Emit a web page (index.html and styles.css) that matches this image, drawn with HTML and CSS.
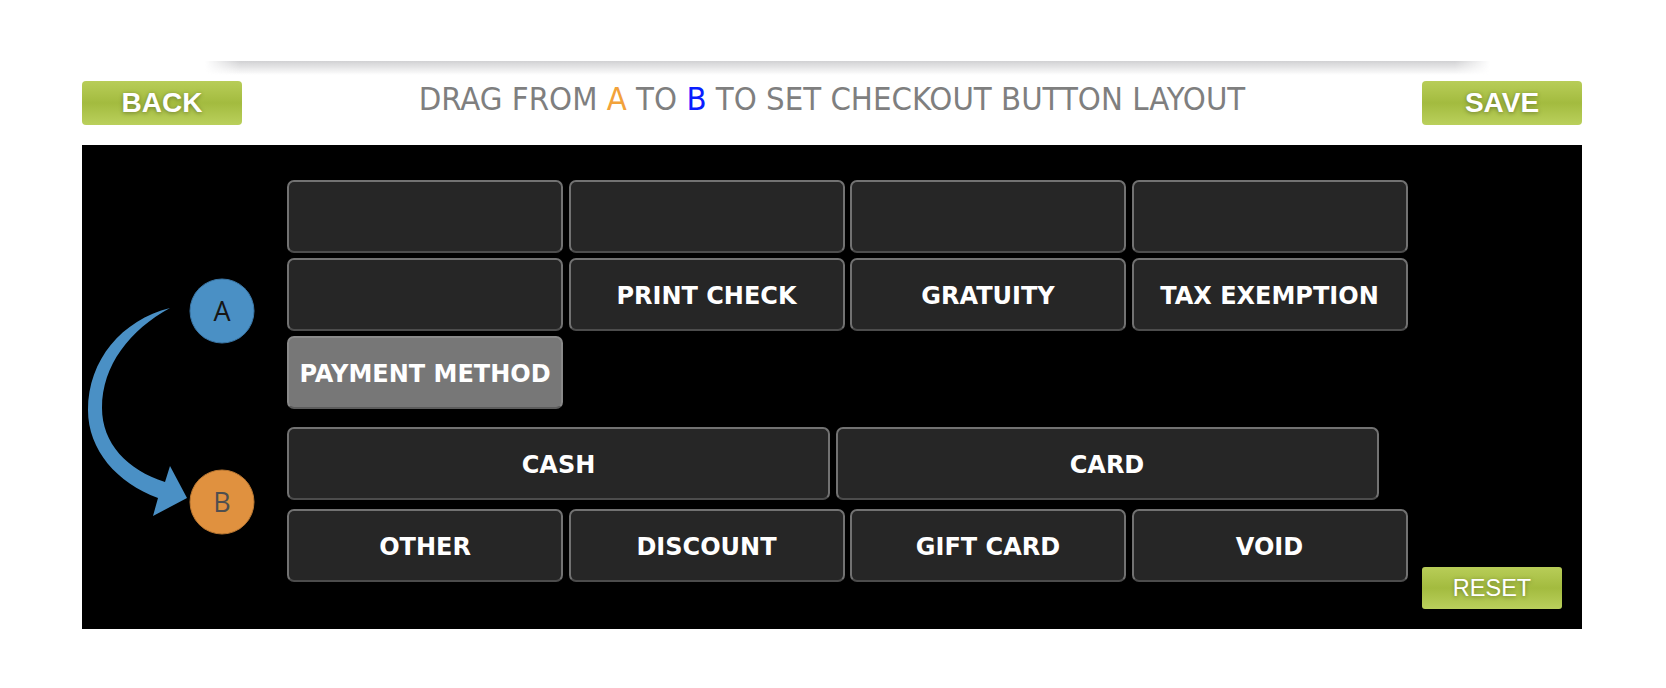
FILE: index.html
```html
<!DOCTYPE html>
<html lang="en">
<head>
    <meta charset="UTF-8">
    <meta name="viewport" content="width=device-width, initial-scale=1.0">
    <title>Checkout Button Layout</title>
    <link rel="stylesheet" href="styles.css">
</head>
<body>
    <div class="top-shadow"></div>
    <div class="toolbar">
        <a href="#" class="green-button">BACK</a>
        <div class="title">DRAG FROM <span class="from">A</span> TO <span class="to">B</span> TO SET CHECKOUT BUTTON LAYOUT</div>
        <a href="#" class="green-button">SAVE</a>
    </div>
    <div class="panel">
        <div class="legend">
            <svg width="205" height="484" viewBox="0 0 205 484">
                <path class="arrow" d="M88 163 C40 175 6 215 6 265 C6 305 35 338 76 353 L71 371 L105 353 L88 321 L83 337 C45 325 20 298 20 263 C20 220 48 185 88 163 Z"/>
                <circle class="dot-a" cx="140" cy="166" r="32"/>
                <text class="dot-label" x="140" y="176">A</text>
                <circle class="dot-b" cx="140" cy="357" r="32"/>
                <text class="dot-label label-b" x="140" y="367">B</text>
            </svg>
        </div>
        <div class="board">
            <div class="slots">
                <div class="slot"></div>
                <div class="slot"></div>
                <div class="slot"></div>
                <div class="slot"></div>
                <div class="slot"></div>
                <div class="slot">PRINT CHECK</div>
                <div class="slot">GRATUITY</div>
                <div class="slot">TAX EXEMPTION</div>
                <div class="slot selected">PAYMENT METHOD</div>
            </div>
            <div class="fixed">
                <div class="fixed-row">
                    <div class="slot wide">CASH</div>
                    <div class="slot wide">CARD</div>
                </div>
                <div class="fixed-row">
                    <div class="slot">OTHER</div>
                    <div class="slot">DISCOUNT</div>
                    <div class="slot">GIFT CARD</div>
                    <div class="slot">VOID</div>
                </div>
            </div>
        </div>
        <div class="actions">
            <a href="#" class="green-button reset">RESET</a>
        </div>
    </div>
</body>
</html>
```
FILE: styles.css
```css
body {
    margin: 0;
    padding: 61px 0 0;
    background-color: #fff;
    font-family: "Liberation Sans", Arial, sans-serif;
}
.top-shadow {
    width: 1285px;
    height: 20px;
    margin-left: calc(50% - 628px);
    background: linear-gradient(to bottom, #d1d1d3, rgba(255, 255, 255, 0) 14px);
    -webkit-mask-image: linear-gradient(to right, transparent, #000 35px, #000 calc(100% - 35px), transparent);
    mask-image: linear-gradient(to right, transparent, #000 35px, #000 calc(100% - 35px), transparent);
}
.toolbar {
    width: 1500px;
    height: 44px;
    margin-left: calc(50% - 751px);
    display: flex;
    justify-content: space-between;
    align-items: center;
}
.green-button {
    display: flex;
    align-items: center;
    justify-content: center;
    width: 160px;
    height: 44px;
    border-radius: 4px;
    background: linear-gradient(to bottom, #b8cd58, #a3bb3f 50%, #bad05c);
    color: #fff;
    font-size: 28px;
    font-weight: bold;
    text-decoration: none;
    text-shadow: 0 1px 4px rgba(0, 0, 0, 0.35);
}
.title {
    margin-bottom: 8px;
    font-family: "DejaVu Sans Condensed", "DejaVu Sans", sans-serif;
    font-size: 32.6px;
    color: #7f7f7f;
}
.title .from {
    color: #f2a23a;
}
.title .to {
    color: #0a1eff;
}
.panel {
    width: 1500px;
    height: 484px;
    margin: 20px 0 0 calc(50% - 751px);
    background-color: #000;
    display: flex;
}
.legend {
    width: 205px;
    flex-shrink: 0;
}
.legend svg {
    display: block;
}
.arrow {
    fill: #4a90c5;
}
.dot-a {
    fill: #4a90c5;
    stroke: #3a76a6;
    stroke-width: 1;
}
.dot-b {
    fill: #e0913f;
    stroke: #b87631;
    stroke-width: 1;
}
.dot-label {
    font-family: "Open Sans", sans-serif;
    font-size: 27px;
    fill: #161616;
    text-anchor: middle;
}
.label-b {
    fill: #4f4f4f;
}
.board {
    padding-top: 35px;
}
.slots {
    display: grid;
    grid-template-columns: repeat(4, 276px);
    grid-auto-rows: 73px;
    gap: 5px 5.5px;
}
.slot {
    box-sizing: border-box;
    width: 276px;
    height: 73px;
    padding-top: 3px;
    display: flex;
    align-items: center;
    justify-content: center;
    background-color: #262626;
    border: 2px solid #727272;
    border-bottom-color: #4c4c4c;
    border-radius: 7px;
    color: #fff;
    font-family: "DejaVu Sans", sans-serif;
    font-size: 24px;
    font-weight: bold;
}
.slot.selected {
    background-color: #777;
    border-color: #8a8a8a;
    border-bottom-color: #5c5c5c;
}
.slot.wide {
    width: 543px;
}
.fixed {
    margin-top: 18px;
    display: flex;
    flex-direction: column;
    gap: 9px;
}
.fixed-row {
    display: flex;
    gap: 5.5px;
}
.actions {
    flex: 1;
    display: flex;
    align-items: flex-end;
    justify-content: flex-end;
    padding: 0 20px 20px 0;
}
.green-button.reset {
    width: 140px;
    height: 42px;
    border-radius: 3px;
    font-size: 23.5px;
    font-weight: normal;
}
```
